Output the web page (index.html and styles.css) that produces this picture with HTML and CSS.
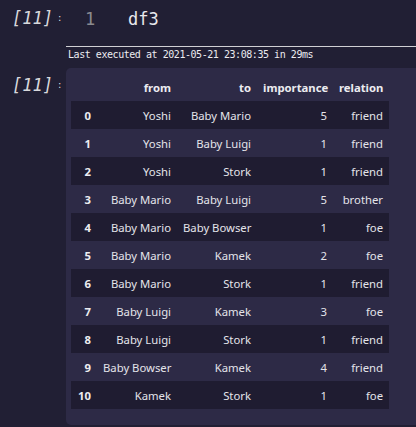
FILE: index.html
```html
<!DOCTYPE html>
<html>
<head>
<meta charset="utf-8">
<link rel="stylesheet" href="styles.css">
</head>
<body>
<div class="cell">
  <div class="in-row">
    <div class="prompt">[11]<span class="colon">:</span></div>
    <div class="code"><span class="ln">1</span><span class="src">df3</span></div>
  </div>
  <div class="exec">Last executed at 2021-05-21 23:08:35 in 29ms</div>
  <div class="out-row">
    <div class="prompt out">[11]<span class="colon">:</span></div>
    <div class="panel">
      <table class="df">
        <colgroup><col class="c0"><col class="c1"><col class="c2"><col class="c3"><col class="c4"></colgroup>
        <thead>
          <tr><th></th><th>from</th><th>to</th><th>importance</th><th>relation</th></tr>
        </thead>
        <tbody>
          <tr><th>0</th><td>Yoshi</td><td>Baby Mario</td><td>5</td><td>friend</td></tr>
          <tr><th>1</th><td>Yoshi</td><td>Baby Luigi</td><td>1</td><td>friend</td></tr>
          <tr><th>2</th><td>Yoshi</td><td>Stork</td><td>1</td><td>friend</td></tr>
          <tr><th>3</th><td>Baby Mario</td><td>Baby Luigi</td><td>5</td><td>brother</td></tr>
          <tr><th>4</th><td>Baby Mario</td><td>Baby Bowser</td><td>1</td><td>foe</td></tr>
          <tr><th>5</th><td>Baby Mario</td><td>Kamek</td><td>2</td><td>foe</td></tr>
          <tr><th>6</th><td>Baby Mario</td><td>Stork</td><td>1</td><td>friend</td></tr>
          <tr><th>7</th><td>Baby Luigi</td><td>Kamek</td><td>3</td><td>foe</td></tr>
          <tr><th>8</th><td>Baby Luigi</td><td>Stork</td><td>1</td><td>friend</td></tr>
          <tr><th>9</th><td>Baby Bowser</td><td>Kamek</td><td>4</td><td>friend</td></tr>
          <tr><th>10</th><td>Kamek</td><td>Stork</td><td>1</td><td>foe</td></tr>
        </tbody>
      </table>
    </div>
  </div>
</div>
</body>
</html>
```
FILE: styles.css
```css
html, body {
  margin: 0;
  padding: 0;
  background: #211f34;
  width: 416px;
  height: 427px;
  overflow: hidden;
}
.cell {
  display: flex;
  flex-direction: column;
}
.in-row {
  display: flex;
  height: 46px;
}
.prompt {
  width: 54px;
  padding-left: 12px;
  font-family: "DejaVu Sans Mono", monospace;
  font-style: italic;
  font-size: 17px;
  color: #d8d8dc;
  padding-top: 8px;
  box-sizing: content-box;
  white-space: nowrap;
}
.prompt.out {
  padding-top: 7px;
}
.colon {
  font-size: 9px;
  font-style: normal;
  margin-left: 4px;
  vertical-align: 3px;
}
.code {
  flex: 1;
  display: flex;
  font-family: "DejaVu Sans Mono", monospace;
  font-size: 17px;
  padding-top: 9px;
}
.ln {
  color: #8a8a8f;
  margin-left: 19px;
  width: 43px;
}
.src {
  color: #e8e8ec;
}
.exec {
  margin-left: 66px;
  border-top: 1px solid #d0d0d4;
  font-family: "DejaVu Sans Mono", monospace;
  font-size: 10px;
  letter-spacing: -0.45px;
  color: #ececf0;
  padding: 2px 0 0 2px;
  height: 19px;
  box-sizing: border-box;
  line-height: 12px;
  white-space: nowrap;
}
.out-row {
  display: flex;
  margin-top: 3px;
}
.panel {
  flex: 1;
  background: #2d2a46;
  border-radius: 5px 0 0 5px;
  padding: 5px 0 16px 5px;
}
.df {
  border-collapse: collapse;
  table-layout: fixed;
  width: 318px;
  font-family: "Noto Sans", sans-serif;
  font-size: 11.3px;
  color: #e4e4ea;
}
.c0 { width: 26px; }
.c1 { width: 80px; }
.c2 { width: 80px; }
.c3 { width: 76px; }
.c4 { width: 56px; }
.df th, .df td {
  height: 28px;
  padding: 0 6px;
  text-align: right;
  white-space: nowrap;
  box-sizing: border-box;
}
.df th {
  font-weight: bold;
  color: #ececf0;
}
.df tbody tr:nth-child(odd) {
  background: #1f1c31;
}
```
